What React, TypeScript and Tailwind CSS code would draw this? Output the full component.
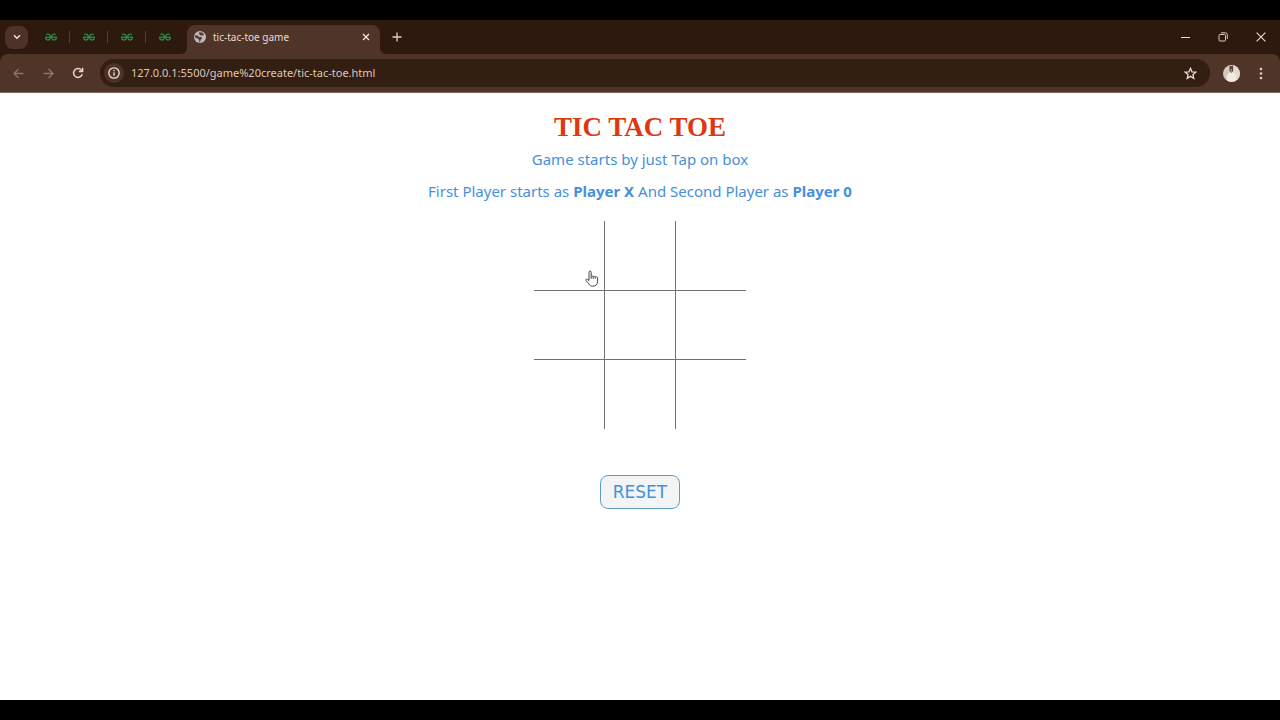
import { useState } from "react";

const iconButton = "flex h-6 w-6 shrink-0 items-center justify-center rounded-full";

function PinnedTab({ last }: { last: boolean }) {
  return (
    <div className="flex items-center">
      <button type="button" aria-label="Pinned tab" className="flex h-6 w-[37px] items-center justify-center">
        <svg width="12" height="8" viewBox="0 0 12 8" fill="none" stroke="#2f8a48" strokeWidth="1.3">
          <path d="M1.2 1.5C3.6.3 5.4 1.8 5.4 4c0 2-1.4 3-2.7 3C1.3 7 .6 5.9.7 4.2h10.6c.1 1.7-.6 2.8-2 2.8C8 7 6.600 6 6.600 4c0-2.200 1.800-3.700 4.200-2.500" />
        </svg>
      </button>
      {!last && <span className="h-3 w-px bg-[#573c2e]" />}
    </div>
  );
}

function TabBar() {
  return (
    <div className="flex h-[34px] items-end bg-[#2e190e] text-[#ead9ce]">
      <div className="flex h-[34px] items-center pl-[5px]">
        <button
          type="button"
          aria-label="Search tabs"
          className="flex h-[23px] w-[23px] items-center justify-center rounded-lg bg-[#4c3227]"
        >
          <svg width="8" height="6" viewBox="0 0 8 6" fill="none" stroke="#f3e6de" strokeWidth="1.5">
            <path d="M1 1.200 4 4.200 7 1.200" />
          </svg>
        </button>
        <div className="flex pl-1">
          {[0, 1, 2, 3].map((n) => (
            <PinnedTab key={n} last={n === 3} />
          ))}
        </div>
      </div>
      <svg width="6" height="6" viewBox="0 0 6 6" className="-ml-0.5" fill="#4f3428">
        <path d="M6 0v6H0a6 6 0 0 0 6-6Z" />
      </svg>
      <div className="flex h-[29px] w-[193px] items-center rounded-t-lg bg-[#4f3428] pr-2 pb-[5px] pl-[7px]">
        <svg width="12" height="12" viewBox="0 0 12 12" className="shrink-0">
          <circle cx="6" cy="6" r="6" fill="#c1b8b3" />
          <path
            d="M.8 4.200 3.600 4.400 5 6h2.200l1 1.500-1.600 1.200-.4 2.400-1-.1V9L3.600 7.600 1 6.400ZM5.200 1.200 8.200 1.400 10.200 3.400 8.600 4.400H6.400L5 3Z"
            fill="#4f4039"
          />
        </svg>
        <span className="min-w-0 flex-1 truncate pl-[7px] text-[10px] leading-4">tic-tac-toe game</span>
        <button type="button" aria-label="Close tab" className="flex h-3 w-3 items-center justify-center">
          <svg width="8" height="8" viewBox="0 0 8 8" stroke="#f3e6de" strokeWidth="1.300">
            <path d="m1 1 6 6M7 1 1 7" />
          </svg>
        </button>
      </div>
      <svg width="6" height="6" viewBox="0 0 6 6" fill="#4f3428">
        <path d="M0 0v6h6a6 6 0 0 1-6-6Z" />
      </svg>
      <button type="button" aria-label="New tab" className="flex h-[34px] w-[22px] items-center justify-center">
        <svg width="10" height="10" viewBox="0 0 10 10" stroke="#e0cfc5" strokeWidth="1.300">
          <path d="M5 .5v9M.5 5h9" />
        </svg>
      </button>
      <div className="ml-auto flex h-[34px] items-center">
        <button type="button" aria-label="Minimize" className="flex h-full w-[38px] items-center justify-center">
          <svg width="9" height="9" viewBox="0 0 9 9" stroke="#eadfd9">
            <path d="M0 4.500h9" />
          </svg>
        </button>
        <button type="button" aria-label="Restore" className="flex h-full w-[38px] items-center justify-center">
          <svg width="10" height="10" viewBox="0 0 10 10" fill="none" stroke="#d9cac1">
            <rect x="1" y="2.500" width="6.500" height="6.500" rx="1" />
            <path d="M3 .8h4.500a1.800 1.800 0 0 1 1.800 1.800V7" />
          </svg>
        </button>
        <button type="button" aria-label="Close" className="flex h-full w-[38px] items-center justify-center">
          <svg width="10" height="10" viewBox="0 0 10 10" stroke="#eadfd9" strokeWidth="1.100">
            <path d="m.6.6 8.800 8.800M9.400.6.6 9.400" />
          </svg>
        </button>
      </div>
    </div>
  );
}

function Toolbar() {
  return (
    <div className="bg-[#2e190e]">
      <div className="flex h-[39px] items-center rounded-t-lg border-b border-[#7a655b] bg-[#4f3428] pr-[7px] pl-[6px]">
        <div className="flex gap-[6px]">
          <button type="button" aria-label="Back" className={iconButton}>
            <svg width="11" height="11" viewBox="0 0 11 11" fill="none" stroke="#8c7468" strokeWidth="1.300">
              <path d="M10.500 5.500H1.200M5.500 1 1 5.500 5.500 10" />
            </svg>
          </button>
          <button type="button" aria-label="Forward" className={iconButton}>
            <svg width="11" height="11" viewBox="0 0 11 11" fill="none" stroke="#8c7468" strokeWidth="1.300">
              <path d="M.5 5.500h9.300M5.500 1 10 5.500 5.500 10" />
            </svg>
          </button>
          <button type="button" aria-label="Reload" className={iconButton}>
            <svg width="12" height="12" viewBox="0 0 12 12" fill="none" stroke="#e8d8ce" strokeWidth="1.500">
              <path d="M10.200 7.200A4.400 4.400 0 1 1 9.400 3.200L10.600 4.400" />
              <path d="M10.600.8v3.800H6.800" />
            </svg>
          </button>
        </div>
        <div className="ml-[10px] flex h-7 flex-1 items-center rounded-full bg-[#331e12] pr-2 pl-1">
          <button type="button" aria-label="Site information" className="flex h-5 w-5 items-center justify-center rounded-full bg-[#4c3227]">
            <svg width="12" height="12" viewBox="0 0 12 12" fill="none" stroke="#f0e3dc" strokeWidth="1.300">
              <circle cx="6" cy="6" r="5.200" />
              <path d="M6 5.300v3.500M6 3v1.300" />
            </svg>
          </button>
          <input
            aria-label="Address"
            defaultValue="127.0.0.1:5500/game%20create/tic-tac-toe.html"
            className="min-w-0 flex-1 bg-transparent pl-[7px] text-[11px] leading-5 text-[#dcc8bc] outline-none"
          />
          <button type="button" aria-label="Bookmark this page" className={iconButton}>
            <svg width="13" height="13" viewBox="0 0 13 13" fill="none" stroke="#e8d8ce" strokeWidth="1.300">
              <path d="m6.500 1.300 1.500 3.500 3.800.35-2.900 2.500.9 3.700-3.300-2-3.300 2 .9-3.700-2.900-2.500L5 4.800Z" />
            </svg>
          </button>
        </div>
        <button type="button" aria-label="Profile" className={`${iconButton} ml-[9px]`}>
          <svg width="17" height="17" viewBox="0 0 17 17">
            <clipPath id="avatar">
              <circle cx="8.500" cy="8.500" r="8.500" />
            </clipPath>
            <g clipPath="url(#avatar)">
              <path d="M0 0h17v17H0Z" fill="#d3c9c0" />
              <path d="M11 0h6v17h-6Z" fill="#e3dbd2" />
              <path d="M4 17V10l3-3h3l3 3v7Z" fill="#f1ebe4" />
              <path d="M6.500 1h3.500v4.500l-1 2H7.500l-1-2Z" fill="#57463c" />
              <path d="M7.500 4h1.500v3H7.500Z" fill="#a98876" />
            </g>
          </svg>
        </button>
        <button type="button" aria-label="Menu" className={`${iconButton} ml-[6px]`}>
          <svg width="4" height="13" viewBox="0 0 4 13" fill="#e0cfc5">
            <circle cx="2" cy="2" r="1.300" />
            <circle cx="2" cy="6.500" r="1.300" />
            <circle cx="2" cy="11" r="1.300" />
          </svg>
        </button>
      </div>
    </div>
  );
}

function HandPointer() {
  return (
    <svg
      width="14"
      height="18"
      viewBox="0 0 14 18"
      className="pointer-events-none absolute top-[49px] left-[51px]"
      fill="#fff"
      stroke="#444"
      strokeWidth="1"
      strokeLinejoin="round"
    >
      <path d="M4 10.500V2.200c0-1.600 2.200-1.600 2.200 0v4.300c.3-.9 2-.7 2 .3.400-.9 2-.6 2 .4.500-.8 2.400-.4 2.400.7v3.600c0 2.800-1.800 4.700-4.800 4.700-2 0-3-.8-4-2.400L1 10.600c-.7-1.200.6-2 1.500-1.200Z" />
      <path d="M6.200 6.500v2.300M8.200 6.800v2M10.200 7.200v1.600" fill="none" />
    </svg>
  );
}

const edges = [
  "border-r border-b",
  "border-r border-b",
  "border-b",
  "border-r border-b",
  "border-r border-b",
  "border-b",
  "border-r",
  "border-r",
  "",
];

export default function App() {
  const [cells, setCells] = useState<string[]>(Array(9).fill(""));
  const turn = cells.filter(Boolean).length % 2 === 0 ? "X" : "0";
  const play = (i: number) => {
    if (!cells[i]) setCells(cells.map((c, j) => (j === i ? turn : c)));
  };

  return (
    <div className="flex min-h-screen flex-col bg-black py-5 font-['Noto_Sans',sans-serif]">
      <header>
        <TabBar />
        <Toolbar />
      </header>
      <main className="flex flex-1 flex-col items-center bg-white pt-[18px] text-[15px] leading-5 text-[#4590dc]">
        <h1 className="font-['Liberation_Serif',serif] text-[27px] leading-8 font-bold text-[#dc3912]">TIC TAC TOE</h1>
        <p className="mt-[6px]">Game starts by just Tap on box</p>
        <p className="mt-3">
          First Player starts as <b>Player X</b> And Second Player as <b>Player 0</b>
        </p>
        <div className="relative mt-5 grid grid-cols-[71px_71px_70px] grid-rows-[70px_69px_69px]">
          {cells.map((mark, i) => (
            <button
              key={i}
              type="button"
              aria-label={`Box ${i + 1}`}
              onClick={() => play(i)}
              className={`${edges[i]} cursor-pointer border-[#707070] text-[32px]`}
            >
              {mark}
            </button>
          ))}
          <HandPointer />
        </div>
        <button
          type="button"
          onClick={() => setCells(Array(9).fill(""))}
          className="mt-[46px] h-[34px] rounded-lg border border-[#5da0c6] bg-[#f3f4f5] px-3 font-['DejaVu_Sans',sans-serif] text-[17px]"
        >
          RESET
        </button>
      </main>
    </div>
  );
}
